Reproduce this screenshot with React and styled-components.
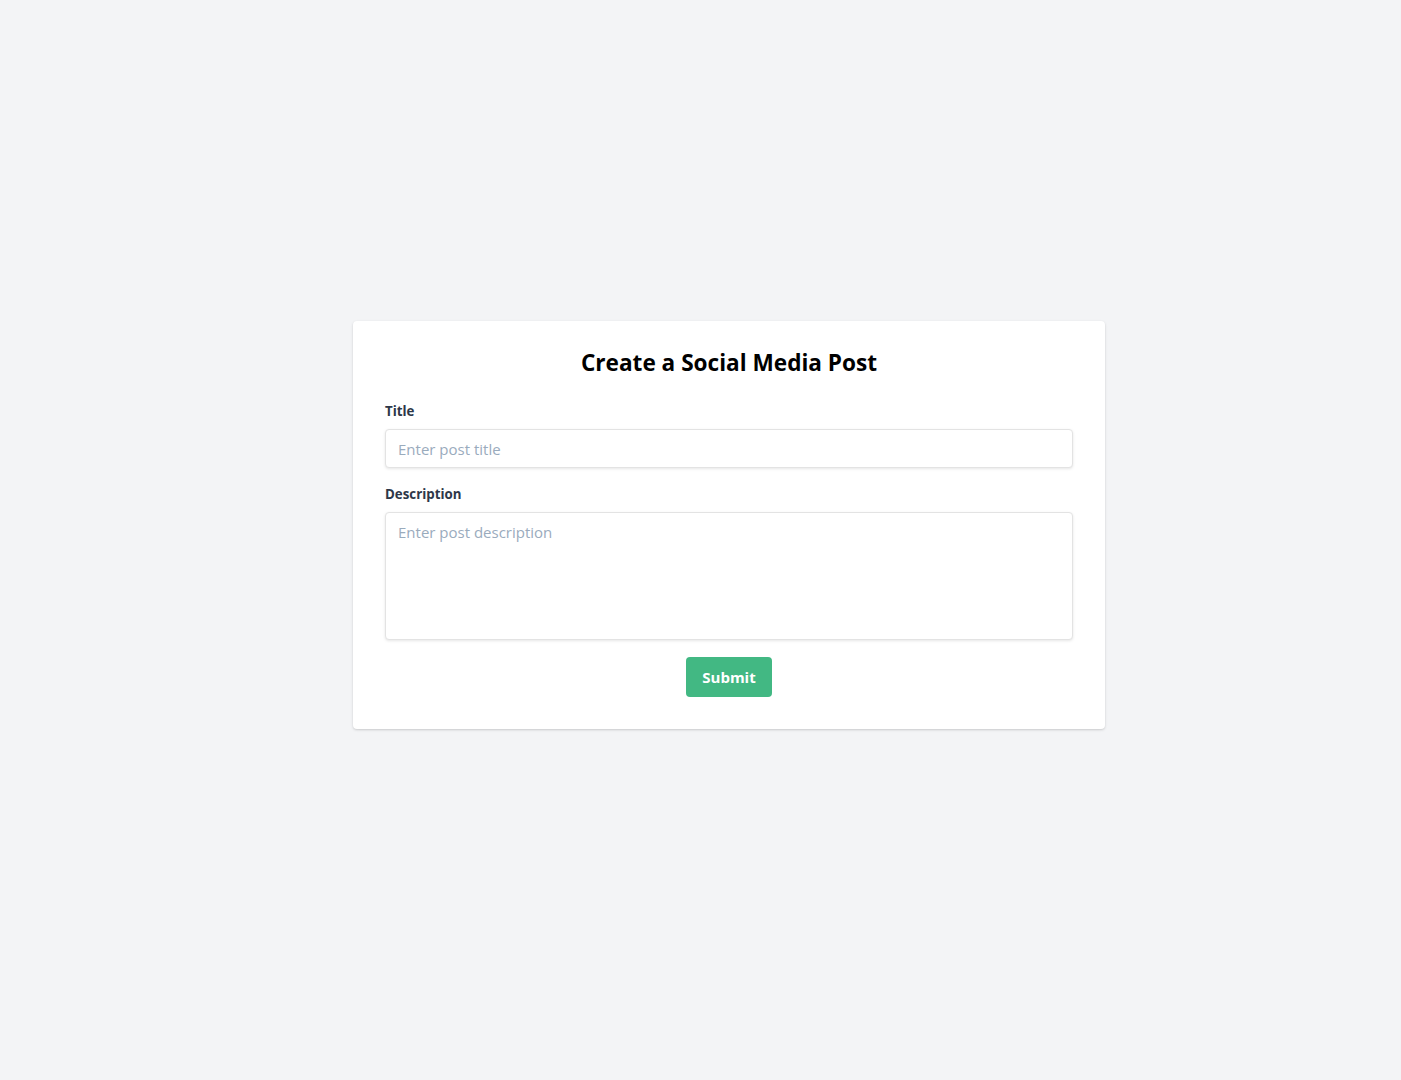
import React, { useState } from 'react';
import styled, { createGlobalStyle } from 'styled-components';

const GlobalStyle = createGlobalStyle`
	* {
		box-sizing: border-box;
	}

	body {
		margin: 0;
		background-color: #f3f4f6;
		font-family: "Open Sans", "Noto Sans", sans-serif;
	}
`

const Page = styled.div`
	min-height: 1080px;
	display: flex;
	justify-content: center;
	align-items: flex-start;
	padding: 321px 0 0 57px;
`

const Card = styled.form`
	width: 752px;
	background-color: #fff;
	border-radius: 4px;
	box-shadow: 0 1px 3px rgba(0, 0, 0, 0.12), 0 1px 2px rgba(0, 0, 0, 0.06);
	padding: 24px 32px 32px;
	display: flex;
	flex-direction: column;
`

const Heading = styled.h2`
	margin: 0 0 20px;
	font-size: 22.6px;
	line-height: 36px;
	font-weight: 700;
	text-align: center;
	color: #000;
`

const Field = styled.div`
	display: flex;
	flex-direction: column;
	margin-bottom: ${(p) => p.$gap || 16}px;
`

const Label = styled.label`
	font-size: 13.3px;
	line-height: 21px;
	font-weight: 700;
	color: #2d3748;
	margin-bottom: 7px;
`

const Input = styled.input`
	height: 39px;
	width: 100%;
	padding: 0 12px;
	border: 1px solid #e3e3e3;
	border-radius: 4px;
	box-shadow: 0 1px 3px rgba(0, 0, 0, 0.1);
	font-family: inherit;
	font-size: 15px;
	color: #4a5568;
	outline: none;

	&::placeholder {
		color: #9aabbd;
	}
`

const TextArea = styled.textarea`
	height: 128px;
	width: 100%;
	padding: 7px 12px;
	border: 1px solid #e3e3e3;
	border-radius: 4px;
	box-shadow: 0 1px 3px rgba(0, 0, 0, 0.1);
	font-family: inherit;
	font-size: 15px;
	line-height: 24px;
	color: #4a5568;
	resize: none;
	outline: none;

	&::placeholder {
		color: #9aabbd;
	}
`

const SubmitButton = styled.button`
	align-self: center;
	height: 40px;
	padding: 0 16px;
	border: none;
	border-radius: 4px;
	background-color: #42b883;
	color: #fff;
	font-family: inherit;
	font-size: 15px;
	font-weight: 700;
	cursor: pointer;
`

export default function App() {
	const [title, setTitle] = useState('');
	const [description, setDescription] = useState('');

	const handleSubmit = (e) => {
		e.preventDefault();
	};

	return (
		<>
			<GlobalStyle />
			<Page>
				<Card onSubmit={handleSubmit}>
					<Heading>Create a Social Media Post</Heading>
					<Field>
						<Label htmlFor="title">Title</Label>
						<Input
							id="title"
							value={title}
							onChange={(e) => setTitle(e.target.value)}
							placeholder="Enter post title"
						/>
					</Field>
					<Field $gap={17}>
						<Label htmlFor="description">Description</Label>
						<TextArea
							id="description"
							value={description}
							onChange={(e) => setDescription(e.target.value)}
							placeholder="Enter post description"
						/>
					</Field>
					<SubmitButton type="submit">Submit</SubmitButton>
				</Card>
			</Page>
		</>
	);
}
